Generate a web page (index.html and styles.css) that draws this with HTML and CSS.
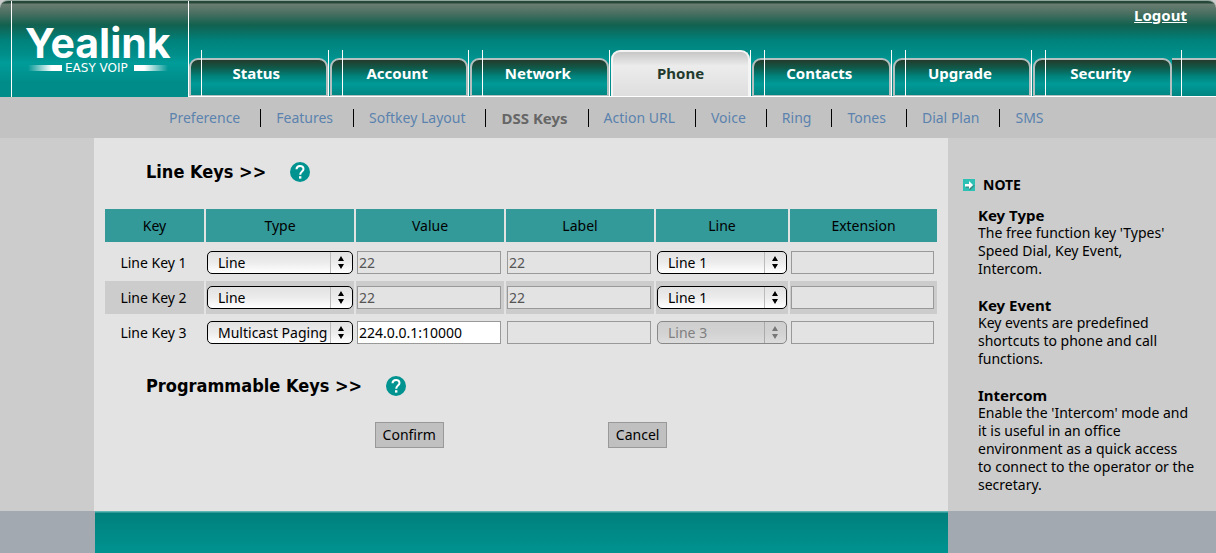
FILE: index.html
```html
<!DOCTYPE html>
<html lang="en">
<head>
    <meta charset="UTF-8">
    <meta name="viewport" content="width=device-width, initial-scale=1.0">
    <title>Yealink - DSS Keys</title>
    <link rel="stylesheet" href="styles.css">
</head>
<body>
    <header class="header">
        <div class="logo">
            <svg width="188" height="97" viewBox="0 0 188 97" role="img" aria-label="Yealink Easy VoIP">
                <defs>
                    <linearGradient id="fade-left">
                        <stop offset="0" stop-color="#fff" stop-opacity="0"/>
                        <stop offset="0.7" stop-color="#fff"/>
                    </linearGradient>
                    <linearGradient id="fade-right">
                        <stop offset="0.3" stop-color="#fff"/>
                        <stop offset="1" stop-color="#fff" stop-opacity="0"/>
                    </linearGradient>
                </defs>
                <text class="logo-name" x="25" y="58">Yealink</text>
                <rect x="28" y="65" width="34" height="6" fill="url(#fade-left)"/>
                <text class="logo-tag" x="65" y="72">EASY VOIP</text>
                <rect x="134" y="65" width="34" height="6" fill="url(#fade-right)"/>
            </svg>
        </div>
        <div class="header-main">
            <a class="logout" href="#">Logout</a>
            <nav class="tabs">
                <div class="tab"><a href="#">Status</a></div>
                <div class="tab"><a href="#">Account</a></div>
                <div class="tab"><a href="#">Network</a></div>
                <div class="tab tab-active"><a href="#">Phone</a></div>
                <div class="tab"><a href="#">Contacts</a></div>
                <div class="tab"><a href="#">Upgrade</a></div>
                <div class="tab tab-last"><a href="#">Security</a></div>
                <div class="tab-rest"></div>
            </nav>
        </div>
    </header>

    <nav class="subnav">
        <a href="#">Preference</a>
        <a href="#">Features</a>
        <a href="#">Softkey Layout</a>
        <a class="current" href="#">DSS Keys</a>
        <a href="#">Action URL</a>
        <a href="#">Voice</a>
        <a href="#">Ring</a>
        <a href="#">Tones</a>
        <a href="#">Dial Plan</a>
        <a href="#">SMS</a>
    </nav>

    <div class="page">
        <main class="content">
            <h2 class="section-title">
                Line Keys &gt;&gt;
                <svg class="help" viewBox="0 0 20 20" aria-hidden="true">
                    <circle cx="10" cy="10" r="10"/>
                    <path d="M6.5 7.3C6.5 2.8 13.5 2.8 13.5 7C13.5 9.6 10.2 9.6 10.2 12.7"/>
                    <rect x="9" y="14.2" width="2.4" height="2.4"/>
                </svg>
            </h2>

            <table class="keys">
                <colgroup>
                    <col class="col-key">
                    <col class="col-wide">
                    <col class="col-wide">
                    <col class="col-wide">
                    <col class="col-line">
                    <col>
                </colgroup>
                <thead>
                    <tr>
                        <th>Key</th>
                        <th>Type</th>
                        <th>Value</th>
                        <th>Label</th>
                        <th>Line</th>
                        <th>Extension</th>
                    </tr>
                </thead>
                <tbody>
                    <tr>
                        <td class="key-name">Line Key 1</td>
                        <td><select aria-label="Line Key 1 type"><option>Line</option></select></td>
                        <td><input type="text" aria-label="Line Key 1 value" value="22" disabled></td>
                        <td><input type="text" aria-label="Line Key 1 label" value="22" disabled></td>
                        <td><select aria-label="Line Key 1 line"><option>Line 1</option></select></td>
                        <td><input type="text" aria-label="Line Key 1 extension" disabled></td>
                    </tr>
                    <tr>
                        <td class="key-name">Line Key 2</td>
                        <td><select aria-label="Line Key 2 type"><option>Line</option></select></td>
                        <td><input type="text" aria-label="Line Key 2 value" value="22" disabled></td>
                        <td><input type="text" aria-label="Line Key 2 label" value="22" disabled></td>
                        <td><select aria-label="Line Key 2 line"><option>Line 1</option></select></td>
                        <td><input type="text" aria-label="Line Key 2 extension" disabled></td>
                    </tr>
                    <tr>
                        <td class="key-name">Line Key 3</td>
                        <td><select aria-label="Line Key 3 type"><option>Multicast Paging</option></select></td>
                        <td><input type="text" aria-label="Line Key 3 value" value="224.0.0.1:10000"></td>
                        <td><input type="text" aria-label="Line Key 3 label" disabled></td>
                        <td><select aria-label="Line Key 3 line" disabled><option>Line 3</option></select></td>
                        <td><input type="text" aria-label="Line Key 3 extension" disabled></td>
                    </tr>
                </tbody>
            </table>

            <h2 class="section-title">
                Programmable Keys &gt;&gt;
                <svg class="help" viewBox="0 0 20 20" aria-hidden="true">
                    <circle cx="10" cy="10" r="10"/>
                    <path d="M6.5 7.3C6.5 2.8 13.5 2.8 13.5 7C13.5 9.6 10.2 9.6 10.2 12.7"/>
                    <rect x="9" y="14.2" width="2.4" height="2.4"/>
                </svg>
            </h2>

            <div class="actions">
                <button type="button">Confirm</button>
                <button type="button">Cancel</button>
            </div>
        </main>

        <aside class="note">
            <h3 class="note-title">
                <svg width="12" height="12" viewBox="0 0 12 12" aria-hidden="true">
                    <rect width="12" height="12" fill="#2ebfb5"/>
                    <path d="M3 8H7V10.5L11 6.5" fill="none" stroke="#46615e"/>
                    <path d="M2 5H6V2L10 6L6 10V7.5H2Z" fill="#fff"/>
                </svg>
                NOTE
            </h3>
            <dl>
                <dt>Key Type</dt>
                <dd>The free function key 'Types' Speed Dial, Key Event,<br>Intercom.</dd>
                <dt>Key Event</dt>
                <dd>Key events are predefined shortcuts to phone and call functions.</dd>
                <dt>Intercom</dt>
                <dd>Enable the 'Intercom' mode and it is useful in an office environment as a quick access<br>to connect to the operator or the secretary.</dd>
            </dl>
        </aside>
    </div>

    <footer class="footer"></footer>
</body>
</html>
```

FILE: styles.css
```css
* {
    margin: 0;
    padding: 0;
    box-sizing: border-box;
}

body {
    display: flex;
    flex-direction: column;
    min-height: 100vh;
    background-color: #ccc;
    color: #000;
    font-family: Tahoma, "Noto Sans", sans-serif;
    font-size: 14px;
    line-height: 18px;
}

a {
    text-decoration: none;
}

/* Header */
.header {
    display: flex;
    height: 97px;
    border-top: 1px solid #8fa59b;
    border-radius: 8px 8px 0 0;
    background: linear-gradient(#26483a 0, #26483a 2px, #6b7d72 3px, #4a7062 12px, #12614f 24px, #00827c 40px, #008f8b 54px, #009c99 62px, #008c89 82px, #008c89 96px);
}

.logo {
    position: relative;
    width: 189px;
    border-right: 1px solid #fff;
}

.logo::before {
    content: "";
    position: absolute;
    top: 0;
    bottom: 0;
    left: 11px;
    width: 1px;
    background-color: #fff;
}

.logo svg {
    display: block;
    margin-top: -1px;
}

.logo-name {
    fill: #fff;
    font-family: Inter, sans-serif;
    font-size: 41px;
    font-weight: 700;
}

.logo-tag {
    fill: #fff;
    font-family: "DejaVu Sans", sans-serif;
    font-size: 12px;
}

.header-main {
    flex: 1;
    display: flex;
    flex-direction: column;
    justify-content: space-between;
}

.logout {
    align-self: flex-end;
    margin: 5px 29px 0 0;
    color: #fff;
    font-size: 15px;
    font-weight: bold;
    text-decoration: underline;
}

.tabs {
    display: flex;
    height: 47px;
    border-bottom: 1px solid #fff;
}

.tab {
    position: relative;
    flex: 1;
    margin-right: 1px;
    padding-top: 8px;
    border-right: 1px solid #fff;
}

/* cell divider next to the left edge of each tab */
.tab::after {
    content: "";
    position: absolute;
    top: 0;
    bottom: 0;
    left: 12px;
    width: 1px;
    background-color: #fff;
}

.tab a {
    display: block;
    height: 38px;
    padding: 4px 4px 0 0;
    border: 2px solid #b4bfbf;
    border-bottom-width: 1px;
    border-radius: 9px 9px 0 0;
    background: linear-gradient(#243a2b 0, #0f5a4a 8px, #00827c 16px, #009a97 24px, #008582 36px);
    color: #fff;
    font-size: 15px;
    font-weight: bold;
    text-align: center;
}

.tab-active {
    padding-top: 0;
}

.tab-active::after {
    display: none;
}

.tab-active a {
    height: 46px;
    padding: 12px 0 0;
    border-color: #f4f4f4;
    border-bottom: 0;
    background: linear-gradient(#c6c6c6 0, #ececec 14px, #dedede 44px);
    color: #223a2e;
}

.tab-last {
    margin-right: 0;
    border-right: 0;
}

.tab-rest {
    position: relative;
    width: 44px;
    margin-top: 8px;
    border-top: 2px solid #b4bfbf;
    background: linear-gradient(#243a2b 0, #0f5a4a 8px, #00827c 16px, #009a97 24px, #008582 36px);
}

.tab-rest::after {
    content: "";
    position: absolute;
    top: -10px;
    bottom: 0;
    left: 9px;
    width: 1px;
    background-color: #fff;
}

/* Sub navigation */
.subnav {
    display: flex;
    align-items: center;
    height: 41px;
    padding-left: 154px;
    background-color: #c2c2c2;
}

.subnav a {
    padding: 0 20px 0 15px;
    border-right: 1px solid #000;
    color: #5b82ae;
    white-space: nowrap;
}

.subnav a:last-child {
    border-right: 0;
}

.subnav .current {
    color: #666;
    font-size: 15px;
    font-weight: bold;
}

/* Page body */
.page {
    flex: 1;
    display: flex;
    padding-left: 94px;
}

.content {
    flex: 1;
    padding: 22px 11px 0;
    background-color: #e3e3e3;
}

.section-title {
    display: flex;
    align-items: center;
    gap: 24px;
    height: 24px;
    padding-left: 41px;
    font-family: Tahoma, "DejaVu Sans Condensed", sans-serif;
    font-size: 18px;
}

.help {
    width: 20px;
    height: 20px;
    fill: #fff;
}

.help circle {
    fill: #009390;
}

.help path {
    fill: none;
    stroke: #fff;
    stroke-width: 2;
}

.keys {
    width: calc(100% + 4px);
    margin: 23px -2px;
    border-spacing: 2px;
    table-layout: fixed;
}

.col-key {
    width: 99px;
}

.col-wide {
    width: 148px;
}

.col-line {
    width: 132px;
}

.keys th {
    height: 33px;
    background-color: #339999;
    font-weight: normal;
}

.keys td {
    height: 33px;
    padding: 0 3px 0 1px;
}

.keys td:has(select) {
    padding: 0 1px;
}

.keys tbody tr:first-child td {
    height: 35px;
    padding-top: 2px;
}

.keys tbody tr:nth-child(even) td {
    background-color: #ccc;
}

.keys .key-name {
    text-align: center;
}

.keys input,
.keys select {
    display: block;
    width: 100%;
    height: 23px;
    color: #000;
    font: inherit;
}

.keys input {
    padding: 0 1px;
    border: 1px solid #999;
    background-color: #fff;
}

.keys input:disabled {
    background-color: #e3e3e3;
    color: #555;
}

.keys select {
    appearance: none;
    padding: 0 22px 0 10px;
    border: 1px solid #000;
    border-radius: 5px;
    background:
        url("data:image/svg+xml,%3Csvg xmlns='http://www.w3.org/2000/svg' width='22' height='21'%3E%3Cpath d='M.5 0V21' stroke='%23bbb'/%3E%3Cpath d='M8 9L11 4L14 9ZM8 12L11 17L14 12Z'/%3E%3C/svg%3E") right center no-repeat,
        linear-gradient(#e2e2e2, #ececec 50%, #fff);
}

.keys select:disabled {
    border-color: #888;
    background:
        url("data:image/svg+xml,%3Csvg xmlns='http://www.w3.org/2000/svg' width='22' height='21'%3E%3Cpath d='M.5 0V21' stroke='%23aaa'/%3E%3Cpath fill='%23777' d='M8 9L11 4L14 9ZM8 12L11 17L14 12Z'/%3E%3C/svg%3E") right center no-repeat,
        linear-gradient(#cfcfcf, #d2d2d2 50%, #dcdcdc);
    color: #808080;
    opacity: 1;
}

.actions {
    display: flex;
    justify-content: center;
    gap: 164px;
    margin-top: 24px;
}

.actions button {
    height: 26px;
    padding: 0 7px;
    border: 1px solid #999;
    background-color: #c0c0c0;
    color: #000;
    font: inherit;
}

/* Note column */
.note {
    width: 268px;
    padding: 38px 16px 16px 15px;
}

.note-title {
    display: flex;
    align-items: center;
    gap: 8px;
    margin-bottom: 12px;
    font-size: 14px;
}

.note dl {
    padding-left: 15px;
}

.note dt {
    font-size: 15px;
    font-weight: bold;
}

.note dd {
    margin-bottom: 18px;
}

.note dd:last-child {
    margin-bottom: 0;
}

/* Footer */
.footer {
    height: 42px;
    border: solid #a3a9b1;
    border-width: 0 268px 0 95px;
    background: linear-gradient(#5fb5b2 0, #5fb5b2 1px, #00807d 2px, #009390 42px);
}
```
